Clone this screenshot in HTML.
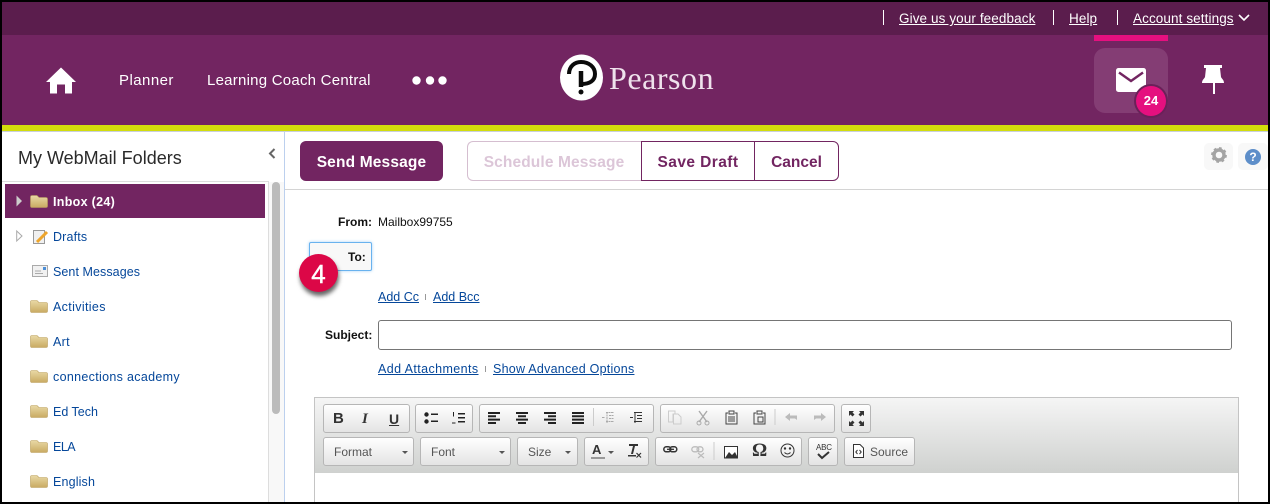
<!DOCTYPE html>
<html><head><meta charset="utf-8"><style>
html,body{margin:0;padding:0;background:#fff}
body{width:1270px;height:504px;position:relative;overflow:hidden;font-family:"Liberation Sans",sans-serif}
.a{position:absolute;white-space:nowrap}
.lnk{color:#fff;text-decoration:underline;font-size:13.5px;top:11px;line-height:16px;letter-spacing:.1px}
.sep{position:absolute;width:1px;background:#fff}
.f{position:absolute;left:53px;font-size:12.5px;color:#05479a;line-height:16px;white-space:nowrap}
.bl{color:#05479a;text-decoration:underline;font-size:12.5px;line-height:16px;position:absolute;white-space:nowrap}
.grp{position:absolute;box-sizing:border-box;border:1px solid #b6b6b6;border-radius:3px;background:linear-gradient(#fff,#e4e4e4);height:29px}
.tb{position:absolute;font-family:"Liberation Sans",sans-serif;font-size:12px;color:#555;line-height:16px;white-space:nowrap}
svg{position:absolute;overflow:visible}
</style></head><body>

<div class="a" style="left:0;top:2px;width:1270px;height:33px;background:#5b1d4d"></div>
<div class="a" style="left:0;top:35px;width:1270px;height:90px;background:#722561"></div>
<div class="a" style="left:0;top:125px;width:1270px;height:6px;background:#d2dd0c"></div>
<div class="a" style="left:0;top:131px;width:1270px;height:1px;background:#c9d0dc"></div>

<div class="sep" style="left:883px;top:10px;height:15px"></div>
<div class="a lnk" style="left:899px">Give us your feedback</div>
<div class="sep" style="left:1053px;top:10px;height:15px"></div>
<div class="a lnk" style="left:1069px">Help</div>
<div class="sep" style="left:1117px;top:10px;height:15px"></div>
<div class="a lnk" style="left:1133px">Account settings</div>
<svg style="left:1238px;top:14px" width="12" height="8"><path d="M1 1L6 6L11 1" fill="none" stroke="#fff" stroke-width="1.6"/></svg>

<svg style="left:46px;top:67px" width="30" height="27"><path d="M15 0.500L30 15H26V26.500H19V17.500H11V26.500H4V15H0Z" fill="#fff"/></svg>
<div class="a" style="left:119px;top:72px;font-size:15px;color:#fff;line-height:18px;letter-spacing:.45px">Planner</div>
<div class="a" style="left:207px;top:72px;font-size:15px;color:#fff;line-height:18px;letter-spacing:.24px">Learning Coach Central</div>
<svg style="left:412px;top:75px" width="36" height="12"><circle cx="4.500" cy="5.500" r="4.200" fill="#fff"/><circle cx="18" cy="5.500" r="4.200" fill="#fff"/><circle cx="30.500" cy="5.500" r="4.200" fill="#fff"/></svg>

<svg style="left:560px;top:54px" width="44" height="47">
<ellipse cx="21.500" cy="23.500" rx="21.500" ry="23" fill="#fff"/>
<path d="M9 20C9 12 15 8 21 8C29 8 35 13 35 20C35 27 29 30 22 30" fill="none" stroke="#0b0b0b" stroke-width="4"/>
<path d="M21 17V33" stroke="#0b0b0b" stroke-width="4.500"/><circle cx="21" cy="38" r="2.500" fill="#0b0b0b"/></svg>
<div class="a" style="left:609px;top:60px;font-family:'Liberation Serif',serif;font-size:32px;line-height:36px;color:#efe2ec;letter-spacing:.55px">Pearson</div>

<div class="a" style="left:1094px;top:35px;width:74px;height:6px;background:#e5107f"></div>
<div class="a" style="left:1094px;top:48px;width:74px;height:65px;border-radius:11px;background:#843d74"></div>
<svg style="left:1116px;top:68px" width="30" height="25"><rect width="30" height="24" rx="2.500" fill="#fff"/><path d="M3 4.500L15 13L27 4.500" fill="none" stroke="#722561" stroke-width="2.400"/></svg>
<div class="a" style="left:1136px;top:86px;width:30px;height:30px;border-radius:50%;background:#e5107f;box-shadow:0 0 0 2px #6a2159"></div>
<div class="a" style="left:1136px;top:93px;width:30px;text-align:center;color:#fff;font-weight:bold;font-size:13px;line-height:16px">24</div>
<svg style="left:1201px;top:64px" width="24" height="32"><path d="M3 1H21V4H19L20 13C21 15 23 16 23 19H14V30H12V19H1C1 16 3 15 4 13L5 4H3Z" fill="#fff"/></svg>

<div class="a" style="left:18px;top:147px;font-size:18px;color:#2a2a2a;line-height:22px">My WebMail Folders</div>
<svg style="left:268px;top:148px" width="8" height="11"><path d="M6.500 1L2 5.500L6.500 10" fill="none" stroke="#666" stroke-width="2"/></svg>
<div class="a" style="left:2px;top:181px;width:266px;height:1px;background:#ddd"></div>
<div class="a" style="left:268px;top:181px;width:1px;height:321px;background:#ddd"></div>
<div class="a" style="left:269px;top:182px;width:15px;height:320px;background:#f8f8f8"></div>
<div class="a" style="left:272px;top:182px;width:8px;height:232px;border-radius:4px;background:#bbb"></div>
<div class="a" style="left:284px;top:132px;width:1px;height:370px;background:#bcd0ee"></div>

<div class="a" style="left:5px;top:184px;width:260px;height:34px;background:#722561"></div>
<svg style="left:16px;top:195px" width="7" height="12"><path d="M0.500 0.500L6 6L0.500 11.500Z" fill="#ccc"/></svg>
<div class="a" style="left:53px;top:194px;font-size:12.500px;font-weight:bold;color:#fff;line-height:16px;letter-spacing:.3px">Inbox (24)</div>
<svg style="left:16px;top:230px" width="7" height="12"><path d="M0.700 1L6 6L0.700 11Z" fill="#fff" stroke="#aaa"/></svg>
<svg style="left:33px;top:229px" width="16" height="16"><rect x="0.500" y="1.500" width="11" height="13" fill="#f0f0f0" stroke="#999"/><path d="M4 13L14 3" stroke="#eea52b" stroke-width="3"/></svg>
<div class="f" style="top:229px;letter-spacing:.15px">Drafts</div>
<svg style="left:32px;top:265px" width="16" height="12"><rect x="0.500" y="0.500" width="15" height="11" fill="#f1f1f1" stroke="#aaa"/><rect x="11" y="2" width="3" height="3" fill="#4b8ed6"/><path d="M3 6H9M3 8.500H11" stroke="#aaa"/></svg>
<div class="f" style="top:264px;letter-spacing:.07px">Sent Messages</div>

<svg style="position:absolute;width:0;height:0"><defs><linearGradient id="g" x1="0" y1="0" x2="0" y2="1"><stop offset="0" stop-color="#e9d9a6"/><stop offset="1" stop-color="#c9aa62"/></linearGradient></defs></svg>
<svg style="left:30px;top:195px" width="18" height="13"><path d="M0.500 2Q0.500 0.500 2 0.500H7L9 2.500H16Q17.500 2.500 17.500 4V11Q17.500 12.500 16 12.500H2Q0.500 12.500 0.500 11Z" fill="url(#g)" stroke="#bb9f5e" stroke-width=".6"/></svg>
<svg style="left:30px;top:300px" width="18" height="13"><path d="M0.500 2Q0.500 0.500 2 0.500H7L9 2.500H16Q17.500 2.500 17.500 4V11Q17.500 12.500 16 12.500H2Q0.500 12.500 0.500 11Z" fill="url(#g)" stroke="#bb9f5e" stroke-width=".6"/></svg>
<div class="f" style="top:299px;letter-spacing:.35px">Activities</div>
<svg style="left:30px;top:335px" width="18" height="13"><path d="M0.500 2Q0.500 0.500 2 0.500H7L9 2.500H16Q17.500 2.500 17.500 4V11Q17.500 12.500 16 12.500H2Q0.500 12.500 0.500 11Z" fill="url(#g)" stroke="#bb9f5e" stroke-width=".6"/></svg>
<div class="f" style="top:334px;letter-spacing:.3px">Art</div>
<svg style="left:30px;top:370px" width="18" height="13"><path d="M0.500 2Q0.500 0.500 2 0.500H7L9 2.500H16Q17.500 2.500 17.500 4V11Q17.500 12.500 16 12.500H2Q0.500 12.500 0.500 11Z" fill="url(#g)" stroke="#bb9f5e" stroke-width=".6"/></svg>
<div class="f" style="top:369px;letter-spacing:.32px">connections academy</div>
<svg style="left:30px;top:405px" width="18" height="13"><path d="M0.500 2Q0.500 0.500 2 0.500H7L9 2.500H16Q17.500 2.500 17.500 4V11Q17.500 12.500 16 12.500H2Q0.500 12.500 0.500 11Z" fill="url(#g)" stroke="#bb9f5e" stroke-width=".6"/></svg>
<div class="f" style="top:404px">Ed Tech</div>
<svg style="left:30px;top:440px" width="18" height="13"><path d="M0.500 2Q0.500 0.500 2 0.500H7L9 2.500H16Q17.500 2.500 17.500 4V11Q17.500 12.500 16 12.500H2Q0.500 12.500 0.500 11Z" fill="url(#g)" stroke="#bb9f5e" stroke-width=".6"/></svg>
<div class="f" style="top:439px;letter-spacing:-.5px">ELA</div>
<svg style="left:30px;top:475px" width="18" height="13"><path d="M0.500 2Q0.500 0.500 2 0.500H7L9 2.500H16Q17.500 2.500 17.500 4V11Q17.500 12.500 16 12.500H2Q0.500 12.500 0.500 11Z" fill="url(#g)" stroke="#bb9f5e" stroke-width=".6"/></svg>
<div class="f" style="top:474px;letter-spacing:.15px">English</div>

<div class="a" style="left:300px;top:141px;width:143px;height:40px;border-radius:6px;background:#722561;color:#fff;font-weight:bold;font-size:15.500px;line-height:43px;text-align:center;letter-spacing:.16px">Send Message</div>
<div class="a" style="left:467px;top:141px;width:175px;height:40px;box-sizing:border-box;border:1px solid #d5bed0;border-right:0;border-radius:6px 0 0 6px;color:#dcc6d8;font-weight:bold;font-size:15.500px;line-height:41px;text-align:center;letter-spacing:.12px;padding-right:2px">Schedule Message</div>
<div class="a" style="left:641px;top:141px;width:114px;height:40px;box-sizing:border-box;border:1px solid #722561;color:#722561;font-weight:bold;font-size:15.500px;line-height:41px;text-align:center;letter-spacing:.42px">Save Draft</div>
<div class="a" style="left:754px;top:141px;width:85px;height:40px;box-sizing:border-box;border:1px solid #722561;border-radius:0 6px 6px 0;color:#722561;font-weight:bold;font-size:15.500px;line-height:41px;text-align:center">Cancel</div>
<div class="a" style="left:285px;top:189px;width:985px;height:1px;background:#d4d4d4"></div>

<div class="a" style="left:1204px;top:143px;width:29px;height:27px;background:#f8f8f8;border-radius:5px"></div>
<svg style="left:1211px;top:147px" width="16" height="16"><circle cx="8" cy="8" r="5" fill="none" stroke="#a4a4a4" stroke-width="3.400"/><circle cx="8" cy="8" r="6.800" fill="none" stroke="#a4a4a4" stroke-width="2.200" stroke-dasharray="2.700 2.600"/></svg>
<div class="a" style="left:1238px;top:143px;width:30px;height:27px;background:#f8f8f8;border-radius:5px"></div>
<div class="a" style="left:1245px;top:149px;width:16px;height:16px;border-radius:50%;background:#5d8ec9;color:#fff;font-weight:bold;font-size:12px;line-height:16px;text-align:center">?</div>

<div class="a" style="left:338px;top:215px;font-size:12px;font-weight:bold;color:#111;line-height:15px">From:</div>
<div class="a" style="left:378px;top:215px;font-size:12px;color:#111;line-height:15px">Mailbox99755</div>

<div class="a" style="left:309px;top:242px;width:63px;height:29px;box-sizing:border-box;border:1px solid #69b2ee;border-radius:2px;background:#f8f8f8;box-shadow:0 0 3px #a9d3f5"></div>
<div class="a" style="left:348px;top:250px;font-size:12px;font-weight:bold;color:#111;line-height:15px">To:</div>
<div class="a" style="left:299px;top:254px;width:39px;height:38px;border-radius:50%;background:#dc0747;box-shadow:1px 4px 4px rgba(0,0,0,.6);color:#fff;font-size:26px;line-height:40px;text-align:center;-webkit-text-stroke:.4px #fff">4</div>

<div class="bl" style="left:378px;top:289px">Add Cc</div>
<div class="a" style="left:425px;top:294px;width:1px;height:6px;background:#999"></div>
<div class="bl" style="left:433px;top:289px">Add Bcc</div>

<div class="a" style="left:325px;top:328px;font-size:12px;font-weight:bold;color:#111;line-height:15px">Subject:</div>
<div class="a" style="left:378px;top:320px;width:854px;height:30px;box-sizing:border-box;border:1px solid #757575;border-radius:3px;background:#fff"></div>

<div class="bl" style="left:378px;top:361px;letter-spacing:.4px">Add Attachments</div>
<div class="a" style="left:485px;top:366px;width:1px;height:6px;background:#999"></div>
<div class="bl" style="left:493px;top:361px;letter-spacing:.25px">Show Advanced Options</div>

<div class="a" style="left:314px;top:397px;width:925px;height:105px;box-sizing:border-box;border:1px solid #c4c4c4;border-bottom:0;background:#fff"></div>
<div class="a" style="left:315px;top:398px;width:923px;height:75px;background:linear-gradient(#f5f5f5,#cfd1cf)"></div>

<div class="grp" style="left:323px;top:404px;width:87px"></div>
<div class="tb" style="left:333px;top:411px;font-weight:bold;font-size:15px;color:#333">B</div>
<div class="tb" style="left:362px;top:411px;font-weight:bold;font-style:italic;font-size:15px;color:#333;font-family:'Liberation Serif',serif">I</div>
<div class="tb" style="left:389px;top:411px;font-weight:bold;font-size:14px;color:#333;text-decoration:underline">U</div>

<div class="grp" style="left:415px;top:404px;width:58px"></div>
<svg style="left:424px;top:412px" width="42" height="13" fill="#222"><circle cx="2.500" cy="2.500" r="2.200"/><circle cx="2.500" cy="9.500" r="2.200"/><path d="M7 1.500H14V3H7ZM7 8.500H14V10H7ZM34 1H41V2.500H34ZM34 5H41V6.500H34ZM34 9H41V10.500H34Z"/><path d="M29.500 0V4.500M28 11H31.500" stroke="#222"/></svg>

<div class="grp" style="left:479px;top:404px;width:175px"></div>
<svg style="left:488px;top:412px" width="160" height="13" fill="#222"><path d="M0 0H12V2H0ZM0 3.300H8V5.300H0ZM0 6.600H12V8.600H0ZM0 10H8V12H0Z"/><path d="M28 0H40V2H28ZM30 3.300H38V5.300H30ZM28 6.600H40V8.600H28ZM30 10H38V12H30Z"/><path d="M56 0H68V2H56ZM60 3.300H68V5.300H60ZM56 6.600H68V8.600H56ZM60 10H68V12H60Z"/><path d="M84 0H96V2H84ZM84 3.300H96V5.300H84ZM84 6.600H96V8.600H84ZM84 10H96V12H84Z"/><path d="M105.500 -4V14" stroke="#ccc" fill="none"/><path d="M118 0.500H126M121 3.500H126M121 6.500H126M118 9.500H126M119 0V11M114 5.500H117" stroke="#aaa" fill="none" stroke-dasharray="2 .5"/><path d="M146 0.500H154M149 3.500H154M149 6.500H154M146 9.500H154M147 0V11M142 5.500H145" stroke="#333" fill="none"/></svg>

<div class="grp" style="left:660px;top:404px;width:175px"></div>
<svg style="left:668px;top:410px" width="162" height="17" fill="none"><path d="M0.500 1H7V4H5V12H0.500ZM5.500 4H10L13 7V14H5.500Z" stroke="#ccc"/><path d="M31 1L39 12M39 1L31 12" stroke="#aaa" stroke-width="1.400"/><circle cx="31" cy="13" r="2" stroke="#aaa"/><circle cx="39" cy="13" r="2" stroke="#aaa"/><path d="M60 3H58V14H69V3H67M61 1H66V4H61ZM60 7H67M60 9H67M60 11H67" stroke="#444"/><path d="M88 3H86V14H97V3H95M89 1H94V4H89ZM90 7H95V12H90Z" stroke="#444"/><path d="M107 -1V15" stroke="#ccc"/><path d="M117 7L122 3V5.500H129L129 10L127 8.500H122V11Z" fill="#bbb"/><path d="M158 7L153 3V5.500H146L146 10L148 8.500H153V11Z" fill="#bbb"/></svg>

<div class="grp" style="left:841px;top:404px;width:30px"></div>
<svg style="left:849px;top:411px" width="15" height="15" fill="#333"><path d="M0 0H5L3.500 1.500L5.500 3.500L3.500 5.500L1.500 3.500L0 5ZM15 0H10L11.500 1.500L9.500 3.500L11.500 5.500L13.500 3.500L15 5ZM0 15H5L3.500 13.500L5.500 11.500L3.500 9.500L1.500 11.500L0 10ZM15 15H10L11.500 13.500L9.500 11.500L11.500 9.500L13.500 11.500L15 10Z"/></svg>

<div class="grp" style="left:323px;top:437px;width:91px"></div>
<div class="tb" style="left:334px;top:444px">Format</div>
<svg style="left:402px;top:451px" width="6" height="3"><path d="M0 0H6L3 3Z" fill="#555"/></svg>
<div class="grp" style="left:420px;top:437px;width:91px"></div>
<div class="tb" style="left:431px;top:444px">Font</div>
<svg style="left:499px;top:451px" width="6" height="3"><path d="M0 0H6L3 3Z" fill="#555"/></svg>
<div class="grp" style="left:517px;top:437px;width:61px"></div>
<div class="tb" style="left:528px;top:444px">Size</div>
<svg style="left:565px;top:451px" width="6" height="3"><path d="M0 0H6L3 3Z" fill="#555"/></svg>

<div class="grp" style="left:584px;top:437px;width:65px"></div>
<div class="tb" style="left:592px;top:442px;font-weight:bold;font-size:13px;color:#333">A</div>
<div class="a" style="left:591px;top:457px;width:14px;height:2px;background:#999"></div>
<svg style="left:608px;top:451px" width="6" height="3"><path d="M0 0H6L3 3Z" fill="#555"/></svg>
<svg style="left:627px;top:444px" width="15" height="15" fill="#333"><path d="M2 0H11V2H8L6 10H4L6 2H2ZM1 11H9V12.500H1Z"/><path d="M9.500 9L14 13.500M14 9L9.500 13.500" stroke="#333" stroke-width="1.200"/></svg>

<div class="grp" style="left:655px;top:437px;width:147px"></div>
<svg style="left:663px;top:444px" width="132" height="17" fill="none"><rect x="0.800" y="2.800" width="7" height="5" rx="2.500" stroke="#333" stroke-width="1.500"/><rect x="6.800" y="2.800" width="7" height="5" rx="2.500" stroke="#333" stroke-width="1.500"/><path d="M4 5.300H11" stroke="#333" stroke-width="1.300"/><rect x="28.800" y="2.800" width="7" height="5" rx="2.500" stroke="#bbb" stroke-width="1.300"/><rect x="34" y="2.800" width="6" height="5" rx="2.500" stroke="#bbb" stroke-width="1.300"/><path d="M35 9L41 14M41 9L35 14" stroke="#bbb" stroke-width="1.200"/><path d="M51 -2V16" stroke="#ccc"/></svg>
<svg style="left:724px;top:446px" width="15" height="13"><rect x="0.500" y="0.500" width="13" height="11.500" fill="#fff" stroke="#333"/><path d="M1 12L5 6L8 9L11 6L14 12Z" fill="#333"/></svg>
<div class="tb" style="left:752px;top:441px;font-family:'Liberation Serif',serif;font-size:19px;font-weight:bold;color:#333;line-height:20px">Ω</div>
<svg style="left:780px;top:443px" width="15" height="15" fill="none" stroke="#333"><circle cx="7.500" cy="7.500" r="6.500"/><path d="M4.500 9.500Q7.500 12.500 10.500 9.500"/><circle cx="5" cy="5.500" r=".7" fill="#333"/><circle cx="10" cy="5.500" r=".7" fill="#333"/></svg>

<div class="grp" style="left:808px;top:437px;width:30px"></div>
<div class="tb" style="left:816px;top:443px;font-size:8px;line-height:9px;color:#333;letter-spacing:-.2px">ABC</div>
<svg style="left:816px;top:451px" width="15" height="9"><path d="M2 3L6 7L13 1" fill="none" stroke="#333" stroke-width="2"/></svg>

<div class="grp" style="left:844px;top:437px;width:71px"></div>
<svg style="left:853px;top:444px" width="11" height="14" fill="none"><path d="M0.500 0.500H7L10.500 4V13.500H0.500Z" fill="#fff" stroke="#333"/><path d="M4.500 6L2.800 8L4.500 10M6.500 6L8.200 8L6.500 10" stroke="#333"/></svg>
<div class="tb" style="left:870px;top:444px">Source</div>

<div class="a" style="left:0;top:0;width:1270px;height:2px;background:#000"></div>
<div class="a" style="left:0;top:502px;width:1270px;height:2px;background:#000"></div>
<div class="a" style="left:0;top:0;width:2px;height:504px;background:#000"></div>
<div class="a" style="left:1268px;top:0;width:2px;height:504px;background:#000"></div>
</body></html>
